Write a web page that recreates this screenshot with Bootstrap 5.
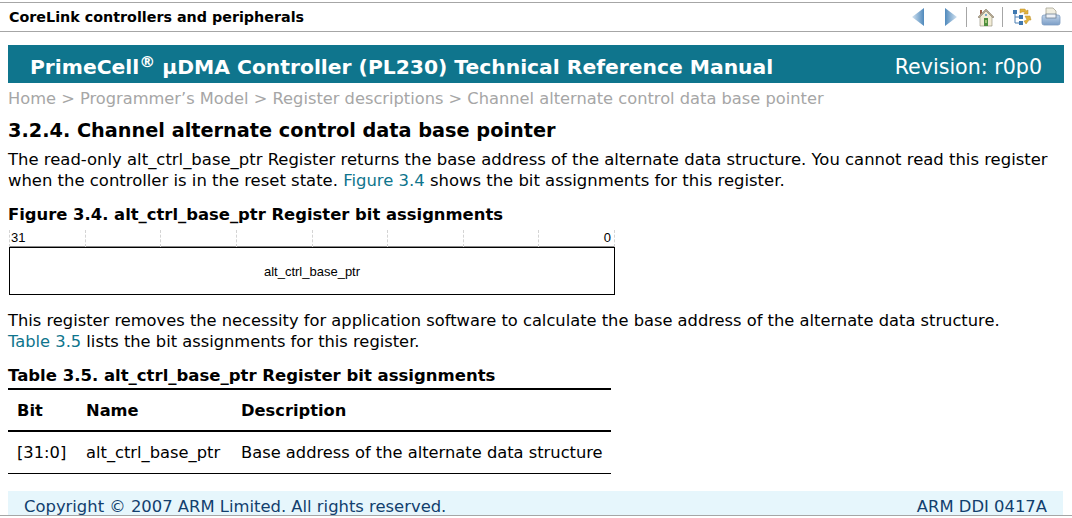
<!DOCTYPE html>
<html lang="en">
<head>
<meta charset="UTF-8">
<title>Channel alternate control data base pointer</title>
<link href="https://cdn.jsdelivr.net/npm/bootstrap@5.3.0/dist/css/bootstrap.min.css" rel="stylesheet">
<style>
html, body { height: 518px; overflow: hidden; }
body { background: #fff; color: #000; font-family: "DejaVu Sans", Verdana, sans-serif; font-size: 16.4px; line-height: 21px; }
a { color: #0f758d; text-decoration: none; }
.top-bar { height: 30px; margin-top: 2px; border-top: 1px solid #a6a6a6; border-bottom: 1px solid #a6a6a6; padding: 0 11px 0 9px; }
.book-name { font-weight: 700; font-size: 14.3px; padding-top: 1px; }
.nav-sep { width: 1px; height: 20px; background: #a6a6a6; }
.nav-next { margin-left: 17px; }
.nav-sep-a { margin-left: 7px; }
.nav-home { margin-left: 10px; }
.nav-sep-b { margin-left: 7px; }
.nav-tool { margin-left: 9px; }
.title-bar { background: #0f758d; color: #fff; height: 38px; margin: 13px 8px 0; padding: 7px 22px 0; font-size: 20.6px; }
.title-bar .doc-title { font-weight: 700; font-size: 20.3px; }
.title-bar sup { font-size: 16px; top: -.45em; }
.crumbs { color: #a6a6a6; margin: 5px 8px 0; height: 22px; line-height: 22px; font-size: 16.25px; }
.page-body { margin: 0 8px; }
h1.sect { font-size: 19.3px; font-weight: 700; margin: 9px 0 6px; line-height: 24px; }
.page-body p { margin: 0; font-size: 16.45px; }
.page-body p.reg-after { margin-top: 15px; font-size: 16.3px; }
.fig-title { font-size: 16.4px; font-weight: 700; line-height: 20px; margin: 14px 0 3px; }
.fig-title.tbl-title { font-size: 16.5px; margin-bottom: 2px; }
.reg-scale { width: 606px; height: 19px; margin-left: 1px; padding-top: 2px; font: 13px/16px "Liberation Sans", Arial, sans-serif; }
.reg-scale > div { flex: 1; border-right: 1px dashed #d4d4d4; padding: 0 3px 0 1px; }
.reg-scale > div:first-child { border-left: 1px dashed #d4d4d4; }
.reg-box { width: 606px; height: 48px; margin-left: 1px; border: 1px solid #000; box-shadow: 0 -1px 0 #8a8a8a; font: 13px "Liberation Sans", Arial, sans-serif; }
.reg-table { width: 603px; border-top: 2px solid #000; table-layout: fixed; font-size: 16.3px; }
.reg-table th, .reg-table td { padding: 10px 8px 10px 9px; line-height: 21px; white-space: nowrap; }
.reg-table .col-bit { width: 69px; }
.reg-table .col-name { width: 155px; }
.reg-table thead th { padding-bottom: 9px; border-bottom: 2px solid #000; }
.reg-table tbody td { border-bottom: 1px solid #000; }
.foot-bar { background: #e6f6fc; color: #123f6e; margin: 17px 9px 0 8px; height: 24px; padding: 5px 16px 0; font-size: 16.4px; }
.end-line { border-top: 1px solid #a6a6a6; }
</style>
</head>
<body>
  <div class="top-bar d-flex align-items-center justify-content-between">
    <span class="book-name">CoreLink controllers and peripherals</span>
    <div class="d-flex align-items-center">
      <svg width="16" height="20" viewBox="0 0 16 20"><defs><linearGradient id="arrowL" x1="0" x2="1" y1="0" y2="0"><stop offset="0" stop-color="#d3e3f1"/><stop offset="1" stop-color="#4f89bc"/></linearGradient><linearGradient id="arrowR" x1="0" x2="1" y1="0" y2="0"><stop offset="0" stop-color="#4f89bc"/><stop offset="1" stop-color="#d3e3f1"/></linearGradient></defs><path d="M14 1 2 10l12 9z" fill="url(#arrowL)"/></svg>
      <svg class="nav-next" width="16" height="20" viewBox="0 0 16 20"><path d="M2 1l12 9-12 9z" fill="url(#arrowR)"/></svg>
      <span class="nav-sep nav-sep-a"></span>
      <svg class="nav-home" width="18" height="20" viewBox="0 0 18 20"><path d="M3 3h2v3L3 8z" fill="#a0614a"/><path d="M1 10l8-8 8 8-1 1-7-7-7 7z" fill="#b8a98e" stroke="#7c7466" stroke-width=".5"/><path d="M3 10l6-6 6 6v9H3z" fill="#f2ecd6" stroke="#8c8674" stroke-width=".6"/><rect x="7" y="11" width="4" height="8" fill="#4f8f3e"/><rect x="8" y="7" width="2" height="2" fill="#7fa8cc"/><rect x="8.4" y="13" width="1.2" height="3" fill="#d8e8a0"/></svg>
      <span class="nav-sep nav-sep-b"></span>
      <svg class="nav-tool" width="20" height="20" viewBox="0 0 20 20"><path d="M3 6v10h5M3 10h5" fill="none" stroke="#4f80b4"/><rect x="1" y="3" width="4" height="4" fill="#3f78b0"/><rect x="7" y="8" width="4" height="4" fill="#3f78b0"/><rect x="7" y="14" width="4" height="4" fill="#3f78b0"/><path d="M8 2h5l1 2 2-1v4h-4l1-2h-3L8 6z" fill="#e3b43c" stroke="#b88d2c" stroke-width=".5"/><path d="M13 9h5l1 4h-2l-3 4-2-3 3-1z" fill="#e3b43c" stroke="#b88d2c" stroke-width=".5"/></svg>
      <svg class="nav-tool" width="20" height="20" viewBox="0 0 20 20"><defs><linearGradient id="prn" x1="0" x2="0" y1="0" y2="1"><stop offset="0" stop-color="#c2d5ea"/><stop offset="1" stop-color="#7b9ec7"/></linearGradient></defs><path d="M5 1h7l3 3v5H5z" fill="#f1eee0" stroke="#a8a596" stroke-width=".8"/><rect x="1" y="8" width="18" height="10" rx="2" fill="url(#prn)" stroke="#7f9dc0" stroke-width=".8"/><rect x="5" y="7" width="10" height="4" fill="#eef2f7" stroke="#6f8093" stroke-width=".8"/></svg>
    </div>
  </div>
  <div class="title-bar d-flex align-items-center justify-content-between">
    <span class="doc-title">PrimeCell<sup>®</sup> µDMA Controller (PL230) Technical Reference Manual</span>
    <span>Revision: r0p0</span>
  </div>
  <div class="crumbs">Home &gt; Programmer’s Model &gt; Register descriptions &gt; Channel alternate control data base pointer</div>
  <div class="page-body">
    <h1 class="sect">3.2.4. Channel alternate control data base pointer</h1>
    <p>The read-only alt_ctrl_base_ptr Register returns the base address of the alternate data structure. You cannot read this register when the controller is in the reset state. <a href="#">Figure 3.4</a> shows the bit assignments for this register.</p>
    <div class="fig-title">Figure 3.4. alt_ctrl_base_ptr Register bit assignments</div>
    <div class="reg-scale d-flex">
      <div>31</div><div></div><div></div><div></div><div></div><div></div><div></div><div class="text-end">0</div>
    </div>
    <div class="reg-box d-flex align-items-center justify-content-center">alt_ctrl_base_ptr</div>
    <p class="reg-after">This register removes the necessity for application software to calculate the base address of the alternate data structure. <a href="#" class="text-nowrap">Table 3.5</a> lists the bit assignments for this register.</p>
    <div class="fig-title tbl-title">Table 3.5. alt_ctrl_base_ptr Register bit assignments</div>
    <table class="reg-table">
      <thead><tr><th class="col-bit">Bit</th><th class="col-name">Name</th><th>Description</th></tr></thead>
      <tbody><tr><td>[31:0]</td><td>alt_ctrl_base_ptr</td><td>Base address of the alternate data structure</td></tr></tbody>
    </table>
  </div>
  <div class="foot-bar d-flex justify-content-between">
    <span>Copyright © 2007 ARM Limited. All rights reserved.</span>
    <span>ARM DDI 0417A</span>
  </div>
  <div class="end-line"></div>
<script src="https://cdn.jsdelivr.net/npm/bootstrap@5.3.0/dist/js/bootstrap.bundle.min.js"></script>
</body>
</html>
